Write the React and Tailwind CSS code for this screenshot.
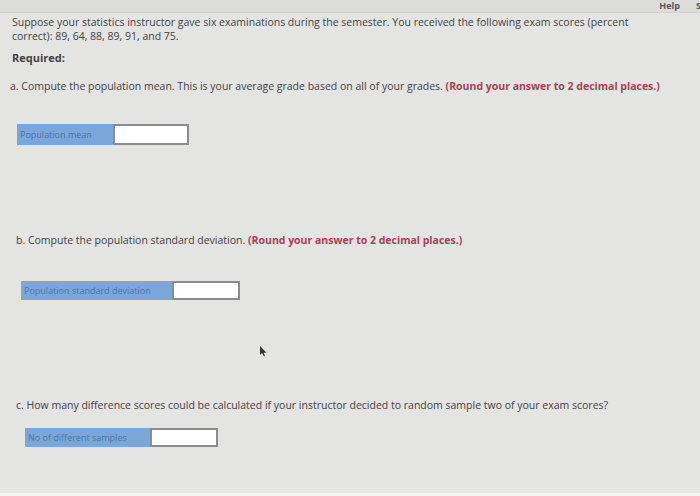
export default function App() {
  const font = { fontFamily: '"Open Sans", "Liberation Sans", Arial, sans-serif' };

  const AnswerField = ({ label, labelWidth, inputWidth, height }) => (
    <div className={`flex items-stretch ${height}`}>
      <div
        className={`${labelWidth} bg-[#7ba6da] text-[#4b76ad] text-[9px] flex items-center pl-[3px] whitespace-nowrap overflow-hidden`}
      >
        {label}
      </div>
      <div className={`${inputWidth} bg-white border-2 border-[#8a8c90]`} />
    </div>
  );

  return (
    <div
      className="w-[700px] h-[496px] bg-[#e4e4e2] text-[#4a4a4c] overflow-hidden flex flex-col relative"
      style={font}
    >
      {/* ==================== TOP BAR ==================== */}
      <div className="h-[13px] bg-[#dcdcdb] border-b border-[#d2d2d1] flex justify-end items-center gap-[16px] shrink-0">
        <span className="text-[9px] font-bold text-[#55575b]">Help</span>
        <span className="text-[9px] font-bold text-[#55575b] w-[4px] overflow-hidden">S</span>
      </div>

      {/* ==================== QUESTION BODY ==================== */}
      <div className="flex-1 pl-[12px] pt-[2px] whitespace-nowrap">
        <p className="text-[10.5px] leading-[14px] text-[#434345]">
          Suppose your statistics instructor gave six examinations during the semester. You received the following exam scores (percent
          <br />
          correct): 89, 64, 88, 89, 91, and 75.
        </p>

        <p className="mt-[8px] text-[11px] leading-[14px] font-bold text-[#434345]">Required:</p>

        <p className="mt-[14px] -ml-[2px] text-[10.5px] leading-[14px] text-[#434345]">
          a. Compute the population mean. This is your average grade based on all of your grades.{' '}
          <span className="font-bold text-[#a94157]">(Round your answer to 2 decimal places.)</span>
        </p>

        <div className="mt-[31px] ml-[5px]">
          <AnswerField label="Population mean" labelWidth="w-[96px]" inputWidth="w-[76px]" height="h-[21px]" />
        </div>

        <p className="mt-[88px] ml-[4px] text-[10.5px] leading-[14px] text-[#434345]">
          b. Compute the population standard deviation.{' '}
          <span className="font-bold text-[#a94157]">(Round your answer to 2 decimal places.)</span>
        </p>

        <div className="mt-[34px] ml-[9px]">
          <AnswerField label="Population standard deviation" labelWidth="w-[151px]" inputWidth="w-[68px]" height="h-[19px]" />
        </div>

        <p className="mt-[98px] ml-[4px] text-[10.5px] leading-[14px] text-[#434345]">
          c. How many difference scores could be calculated if your instructor decided to random sample two of your exam scores?
        </p>

        <div className="mt-[16px] ml-[13px]">
          <AnswerField label="No of different samples" labelWidth="w-[125px]" inputWidth="w-[68px]" height="h-[19px]" />
        </div>
      </div>

      {/* mouse cursor */}
      <svg className="absolute left-[259px] top-[346px]" width="8" height="11" viewBox="0 0 8 11">
        <path d="M1 0 L1 9 L3 7 L5 10.5 L6 10 L4.5 6.8 L7.5 6.8 Z" fill="#333" />
      </svg>

      <div className="h-[3px] bg-[#f4f4f3] shrink-0" />
    </div>
  );
}
